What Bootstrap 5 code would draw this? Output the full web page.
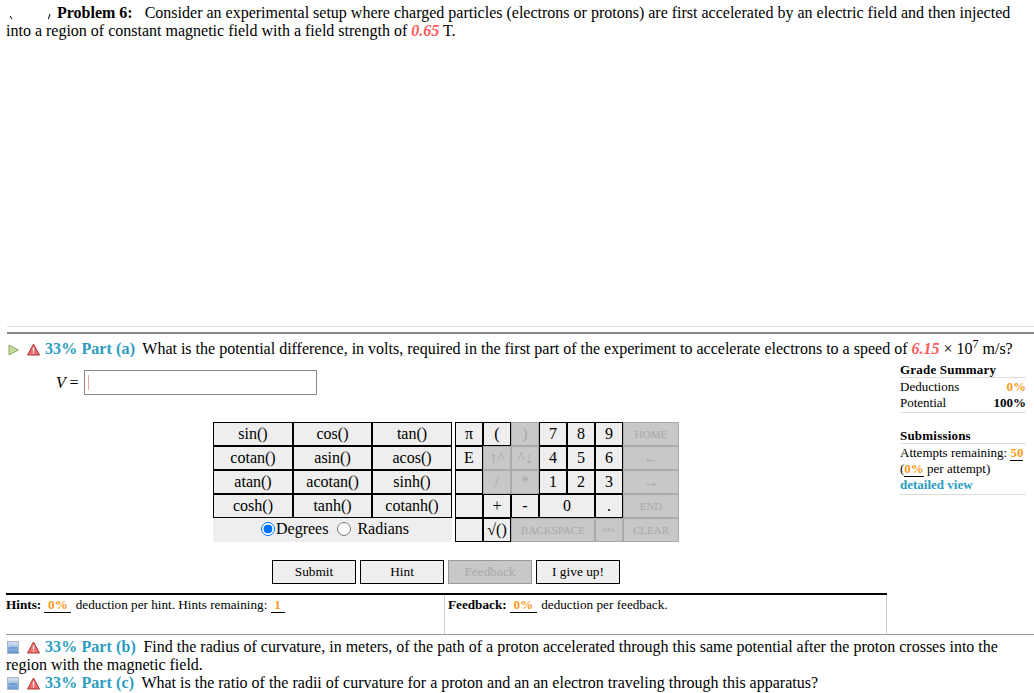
<!DOCTYPE html>
<html lang="en">
<head>
<meta charset="utf-8">
<title>Problem 6</title>
<link href="https://cdn.jsdelivr.net/npm/bootstrap@5.3.0/dist/css/bootstrap.min.css" rel="stylesheet">
<style>
html,body{background:#fff}
body{font-family:"Liberation Serif","Times New Roman",serif;font-size:16px;line-height:18px;color:#000;margin:0;overflow:hidden}
sup{font-size:12px;line-height:0;top:-.5em}
.prob{height:326px;padding:4px 18px 0 6px}
.ticks{width:47px;height:12px;overflow:visible}
.val{color:#ff5a5a;font-weight:700;font-style:italic}
.rule-lite{border-top:1px solid #ddd;margin-left:7px;height:6px}
.rule-a{border-top:2px solid #888;margin-left:7px}
.qline{padding:6px 6px 0 8px;line-height:18px}
.qline svg,.partlow svg{vertical-align:-2px}
.pct{color:#2a9dc0;font-weight:700;letter-spacing:.1px;margin:0 3.5px 0 1px}
.partbody{height:276px}
.work{width:900px;flex:none}
.ansrow{margin-left:54px;height:25px;margin-top:12px}
.ansvar{width:30px;font-style:italic;text-align:left;padding-left:2px}
.ansvar span{font-style:normal}
.ansbox{width:233px;height:25px;border:1px solid #888;background:#fff}
.caret-mark{display:block;width:1px;height:15px;background:#f3a99a;margin:4px 0 0 3px}
.pad{margin:27px 0 0 213px;gap:3px}
.fnpad{width:239px}
.fngrid{display:grid;grid-template-columns:80px 79px 80px;grid-auto-rows:24px}
.keygrid{display:grid;grid-template-columns:repeat(6,28px) 56px;grid-auto-rows:24px;width:224px}
.kk{background:#eee;border:1px solid #000;display:flex;align-items:center;justify-content:center;font-size:16px;line-height:1}
.kk.off{background:#c8c8c8;border-color:#aaa;color:#a9a9a9}
.kk.tiny{font-size:11px}
.kk.mini{font-size:7px}
.span2{grid-column:span 2}
.span3{grid-column:span 3}
.angle{background:#eee;height:24px;display:flex;align-items:center;padding:0 0 2px 48px}
.dot{width:14px;height:14px;border-radius:50%;display:inline-block;border:1px solid #777;background:#fff;margin-right:1px}
.dot.on{border:1.5px solid #0075ff;background:radial-gradient(circle,#0075ff 0 4.2px,#fff 4.7px)}
.gap-r{margin-left:9px;margin-right:6px}
.btnrow{margin:18px 0 0 272px;gap:4px}
.bb{width:84px;height:24px;padding:0;border:1px solid #000;border-radius:0;background:#eee;color:#000;font-family:inherit;font-size:13.333px;line-height:1;display:flex;align-items:center;justify-content:center}
.bb.dis,.bb:disabled{background:#c8c8c8;border-color:#999;color:#a9a9a9;opacity:1}
.hintbar{width:881px;margin:9px 0 0 6px;height:41px;border-top:2px solid #000;font-size:13.2px;line-height:15px}
.hintl{width:439px;border-right:1px solid #ccc;padding-top:2px}
.hintr{width:442px;border-right:1px solid #ccc;padding:2px 0 0 3px}
.ul{display:inline-block;border-bottom:1px solid #000;color:#ff9a1a;font-weight:700;text-align:center;margin:0 1px 0 0;line-height:15px}
.w27{width:27px}
.w14{width:14px}
.rule-b{border-top:1px solid #999;margin-left:6px}
.summary{width:126px;flex:none;font-size:13px;line-height:16px;padding-top:4px}
.sumhead{font-weight:700;letter-spacing:.2px;border-bottom:1px solid #ddd;height:16px;white-space:nowrap}
.sumrows{border-bottom:1px solid #ddd;padding:1px 0;margin-bottom:15px;white-space:nowrap}
.orange{color:#ff9a1a;font-weight:700}
.bold100{font-weight:700}
.sumlink{color:#2a9dc0;font-weight:700}
.sumul{color:#ff9a1a;font-weight:700;border-bottom:1px solid #000}
.partlow{padding:3px 30px 0 6px}
.partlow+.partlow{padding-top:0}
.boxic{margin:0 2px 0 1px}
</style>
</head>
<body>
<div class="prob">
  <svg class="ticks d-inline-block" viewBox="0 0 47 12" aria-hidden="true"><path d="M4 8l2 3M44 6l-1.6 5" stroke="#222" stroke-width="1.1" fill="none"/></svg>
  <b>Problem 6:</b>&nbsp;&nbsp; Consider an experimental setup where charged particles (electrons or protons) are first accelerated by an electric field and then injected into a region of constant magnetic field with a field strength of <span class="val">0.65</span> T.
</div>
<div class="rule-lite"></div>
<div class="rule-a"></div>
<div class="qline">
  <svg width="15" height="12" viewBox="0 0 15 12"><path d="M1 1l9.500 5-9.500 5z" fill="#c5dc9a" stroke="#8aa868"/></svg>
  <svg width="13" height="13" viewBox="0 0 13 13"><path d="M6.500 1L12.500 12H.5z" fill="#ef6a6a" stroke="#a83a3a"/><path d="M6.500 4.500v4M6.500 9.500v1.200" stroke="#fff" stroke-width="1.300"/></svg>
  <span class="pct">33% Part (a)</span> What is the potential difference, in volts, required in the first part of the experiment to accelerate electrons to a speed of <span class="val">6.15</span> × 10<sup>7</sup> m/s?
</div>
<div class="d-flex partbody">
  <div class="work">
    <div class="d-flex ansrow align-items-center">
      <div class="ansvar">V <span>=</span></div>
      <div class="ansbox"><span class="caret-mark"></span></div>
    </div>
    <div class="d-flex pad">
      <div class="fnpad">
        <div class="fngrid">
          <div class="kk">sin()</div><div class="kk">cos()</div><div class="kk">tan()</div>
          <div class="kk">cotan()</div><div class="kk">asin()</div><div class="kk">acos()</div>
          <div class="kk">atan()</div><div class="kk">acotan()</div><div class="kk">sinh()</div>
          <div class="kk">cosh()</div><div class="kk">tanh()</div><div class="kk">cotanh()</div>
        </div>
        <div class="angle"><span class="dot on"></span>Degrees<span class="dot gap-r"></span>Radians</div>
      </div>
      <div class="keygrid">
        <div class="kk">π</div><div class="kk">(</div><div class="kk off">)</div><div class="kk">7</div><div class="kk">8</div><div class="kk">9</div><div class="kk off tiny">HOME</div>
        <div class="kk">E</div><div class="kk off">↑^</div><div class="kk off">^↓</div><div class="kk">4</div><div class="kk">5</div><div class="kk">6</div><div class="kk off">←</div>
        <div class="kk"></div><div class="kk off">/</div><div class="kk off">*</div><div class="kk">1</div><div class="kk">2</div><div class="kk">3</div><div class="kk off">→</div>
        <div class="kk"></div><div class="kk">+</div><div class="kk">-</div><div class="kk span2">0</div><div class="kk">.</div><div class="kk off tiny">END</div>
        <div class="kk"></div><div class="kk">√()</div><div class="kk off tiny span3">BACKSPACE</div><div class="kk off mini">DEL</div><div class="kk off tiny">CLEAR</div>
      </div>
    </div>
    <div class="d-flex btnrow">
      <button type="button" class="btn bb">Submit</button>
      <button type="button" class="btn bb">Hint</button>
      <button type="button" class="btn bb dis" disabled>Feedback</button>
      <button type="button" class="btn bb">I give up!</button>
    </div>
    <div class="d-flex hintbar">
      <div class="hintl"><b>Hints:</b> <span class="ul w27">0%</span> deduction per hint. Hints remaining: <span class="ul w14">1</span></div>
      <div class="hintr"><b>Feedback:</b> <span class="ul w27">0%</span> deduction per feedback.</div>
    </div>
  </div>
  <div class="summary">
    <div class="sumhead">Grade Summary</div>
    <div class="sumrows">
      <div class="d-flex justify-content-between"><span>Deductions</span><span class="orange">0%</span></div>
      <div class="d-flex justify-content-between"><span>Potential</span><span class="bold100">100%</span></div>
    </div>
    <div class="sumhead">Submissions</div>
    <div class="sumrows">
      <div>Attempts remaining: <span class="sumul">50</span></div>
      <div>(<span class="sumul">0%</span> per attempt)</div>
      <div class="sumlink">detailed view</div>
    </div>
  </div>
</div>
<div class="rule-b"></div>
<div class="partlow">
  <svg width="14" height="13" viewBox="0 0 14 13" class="boxic"><defs><linearGradient id="g" x1="0" y1="0" x2="0" y2="1"><stop offset="0" stop-color="#dde6f2"/><stop offset="1" stop-color="#5e93d0"/></linearGradient></defs><rect x=".5" y=".5" width="11" height="12" fill="url(#g)" stroke="#a9b6c6"/><rect x="2" y="6" width="8" height="2" fill="#6a9fd8"/></svg>
  <svg width="13" height="13" viewBox="0 0 13 13"><path d="M6.500 1L12.500 12H.5z" fill="#ef6a6a" stroke="#a83a3a"/><path d="M6.500 4.500v4M6.500 9.500v1.200" stroke="#fff" stroke-width="1.300"/></svg>
  <span class="pct">33% Part (b)</span> Find the radius of curvature, in meters, of the path of a proton accelerated through this same potential after the proton crosses into the region with the magnetic field.
</div>
<div class="partlow">
  <svg width="14" height="13" viewBox="0 0 14 13" class="boxic"><rect x=".5" y=".5" width="11" height="12" fill="url(#g)" stroke="#a9b6c6"/><rect x="2" y="6" width="8" height="2" fill="#6a9fd8"/></svg>
  <svg width="13" height="13" viewBox="0 0 13 13"><path d="M6.500 1L12.500 12H.5z" fill="#ef6a6a" stroke="#a83a3a"/><path d="M6.500 4.500v4M6.500 9.500v1.200" stroke="#fff" stroke-width="1.300"/></svg>
  <span class="pct">33% Part (c)</span> What is the ratio of the radii of curvature for a proton and an an electron traveling through this apparatus?
</div>
<script src="https://cdn.jsdelivr.net/npm/bootstrap@5.3.0/dist/js/bootstrap.bundle.min.js"></script>
</body>
</html>
